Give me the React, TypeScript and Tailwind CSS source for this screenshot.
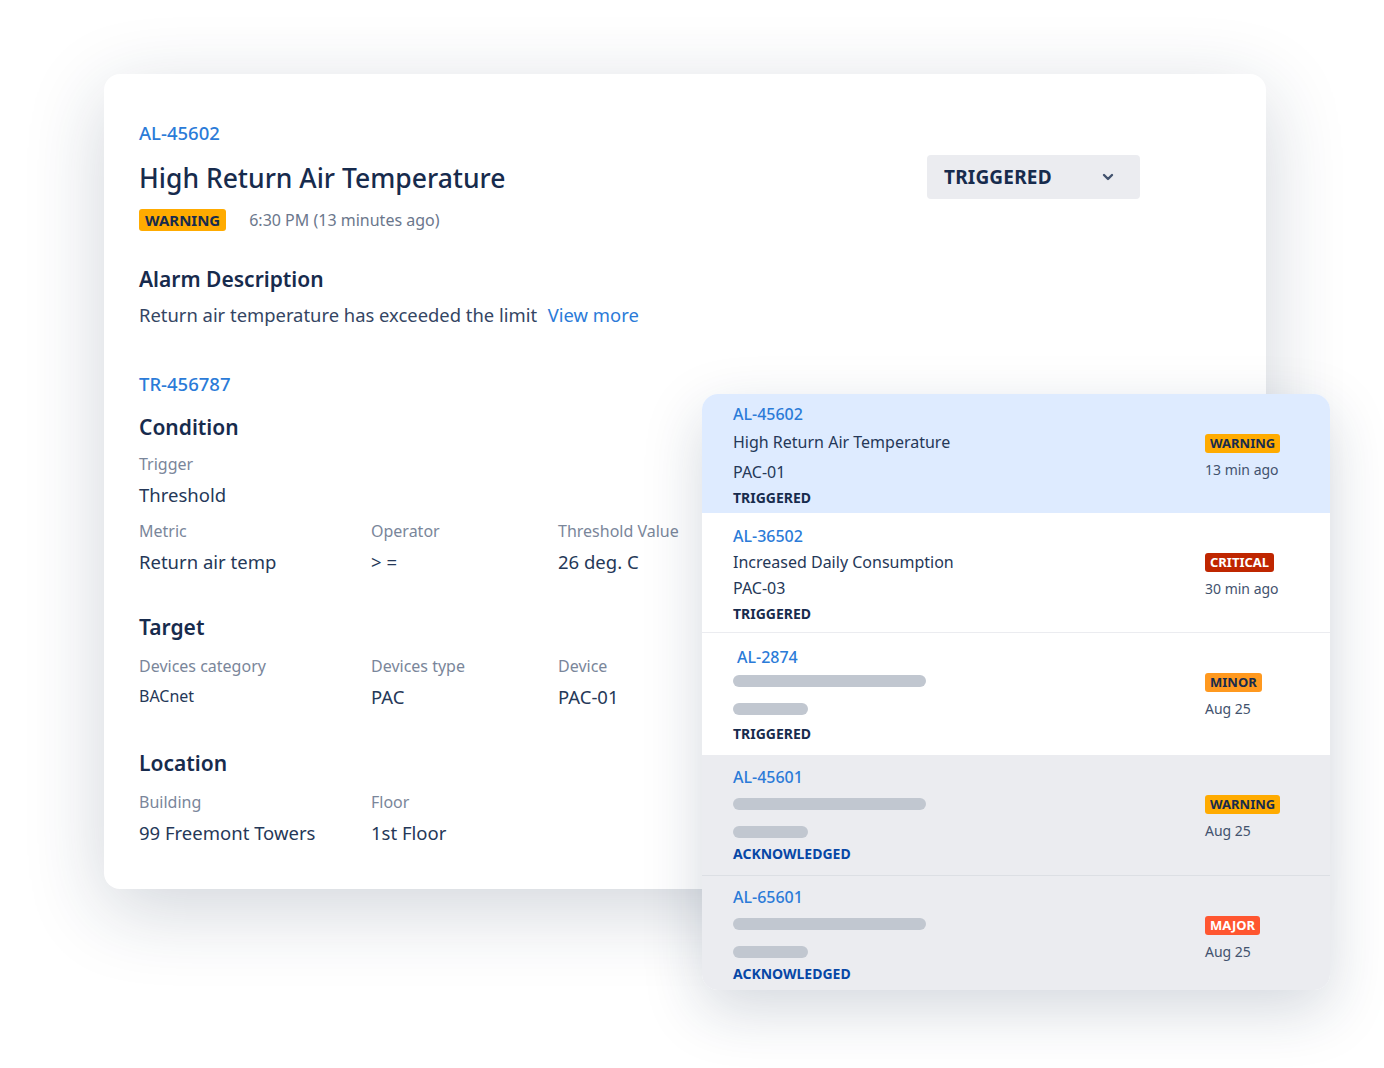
import React from "react";

const FONT = { fontFamily: '"Noto Sans", "Open Sans", sans-serif' };

type Badge = { label: string; cls: string };

const badges: Record<string, Badge> = {
  WARNING: { label: "WARNING", cls: "bg-[#ffab00] text-[#172b4d]" },
  CRITICAL: { label: "CRITICAL", cls: "bg-[#bf2600] text-white" },
  MINOR: { label: "MINOR", cls: "bg-[#ff991f] text-[#172b4d]" },
  MAJOR: { label: "MAJOR", cls: "bg-[#ff5630] text-white" },
};

type Row = {
  id: string;
  title?: string;
  device?: string;
  status: "TRIGGERED" | "ACKNOWLEDGED";
  badge: keyof typeof badges;
  time: string;
  bg: string;
  h: string;
  pt: string;
  lh: string;
  smt: string;
  idOffset?: boolean;
};

const rows: Row[] = [
  { id: "AL-45602", title: "High Return Air Temperature", device: "PAC-01", status: "TRIGGERED", badge: "WARNING", time: "13 min ago", bg: "bg-[#deebff]", h: "h-[119px]", pt: "pt-[7px]", lh: "h-[30px] leading-[30px]", smt: "-mt-[2px]" },
  { id: "AL-36502", title: "Increased Daily Consumption", device: "PAC-03", status: "TRIGGERED", badge: "CRITICAL", time: "30 min ago", bg: "bg-white border-b border-[#ebecf0]", h: "h-[120px]", pt: "pt-[10px]", lh: "h-[26px] leading-[26px]", smt: "mt-0" },
  { id: "AL-2874", status: "TRIGGERED", badge: "MINOR", time: "Aug 25", bg: "bg-white", h: "h-[122px]", pt: "pt-[8px]", lh: "", smt: "-mt-[2px]", idOffset: true },
  { id: "AL-45601", status: "ACKNOWLEDGED", badge: "WARNING", time: "Aug 25", bg: "bg-[#ebecf0] border-b border-[#dcdfe4]", h: "h-[121px]", pt: "pt-[9px]", lh: "", smt: "-mt-[5px]" },
  { id: "AL-65601", status: "ACKNOWLEDGED", badge: "MAJOR", time: "Aug 25", bg: "bg-[#ebecf0]", h: "flex-1", pt: "pt-[8px]", lh: "", smt: "-mt-[5px]" },
];

function ListRow({ r }: { r: Row }) {
  const b = badges[r.badge];
  return (
    <div className={`flex ${r.bg} ${r.h} pl-[31px]`}>
      <div className={`flex-1 ${r.pt}`}>
        <div className={`h-[26px] leading-[26px] text-[16px] font-medium text-[#2b7bd8] ${r.idOffset ? "ml-[4px] mt-[3px]" : ""}`}>{r.id}</div>
        {r.title ? (
          <>
            <div className={`${r.lh} text-[16px] text-[#253858]`}>{r.title}</div>
            <div className={`${r.lh} text-[16px] text-[#253858]`}>{r.device}</div>
          </>
        ) : (
          <>
            <div className={`flex h-[28px] items-center ${r.idOffset ? "-mt-[3px]" : ""}`}>
              <div className="h-[12px] w-[193px] rounded-full bg-[#c1c7d0]" />
            </div>
            <div className="flex h-[28px] items-center">
              <div className="h-[12px] w-[75px] rounded-full bg-[#c1c7d0]" />
            </div>
          </>
        )}
        <div className={`${r.smt} h-[26px] leading-[26px] text-[14px] font-bold ${r.status === "ACKNOWLEDGED" ? "text-[#0747a6]" : "text-[#172b4d]"}`}>{r.status}</div>
      </div>
      <div className="w-[125px] pt-[36px]">
        <span className={`inline-block h-[19px] rounded-[3px] px-[5px] text-[13px] font-bold leading-[19px] ${b.cls}`}>{b.label}</span>
        <div className="mt-[7px] text-[14px] leading-[18px] text-[#42526e]">{r.time}</div>
      </div>
    </div>
  );
}

function Field({ label, value, small }: { label: string; value: string; small?: boolean }) {
  return (
    <div>
      <div className="h-[30px] leading-[30px] text-[16px] text-[#7a869a]">{label}</div>
      <div className={`h-[30px] leading-[30px] text-[#253858] ${small ? "text-[16px] mt-[0px]" : "text-[18.5px] mt-[1px]"}`}>{value}</div>
    </div>
  );
}

export default function App() {
  return (
    <div className="relative h-[1068px] w-[1384px] overflow-hidden bg-white" style={FONT}>
      <div className="pl-[104px] pt-[74px]">
        <div className="h-[815px] w-[1162px] rounded-[16px] bg-white pl-[35px] pt-[44px] shadow-[0_20px_80px_rgba(23,43,77,0.2)]">
          <div className="flex items-start justify-between pr-[126px]">
            <div>
              <div className="h-[30px] leading-[30px] text-[18.5px] font-medium text-[#2b7bd8]">AL-45602</div>
              <div className="mt-[15px] h-[30px] leading-[30px] text-[26.5px] font-medium text-[#172b4d]">High Return Air Temperature</div>
              <div className="mt-[12px] flex h-[30px] items-center">
                <span className="inline-block h-[22px] rounded-[3px] bg-[#ffab00] px-[6px] text-[15px] font-bold leading-[22px] text-[#172b4d]">WARNING</span>
                <span className="ml-[23px] text-[16px] text-[#6b778c]">6:30 PM (13 minutes ago)</span>
              </div>
            </div>
            <div className="mt-[37px] flex h-[44px] w-[213px] items-center justify-between rounded-[4px] bg-[#ebecf0] pl-[17px] pr-[26px]">
              <span className="text-[19px] font-bold tracking-[0.2px] text-[#172b4d]">TRIGGERED</span>
              <svg width="12" height="8" viewBox="0 0 12 8" fill="none">
                <path d="M2 2l4 4 4-4" stroke="#42526e" strokeWidth="2.4" strokeLinecap="round" strokeLinejoin="round" />
              </svg>
            </div>
          </div>

          <div className="mt-[29px] h-[30px] leading-[30px] text-[21px] font-semibold text-[#172b4d]">Alarm Description</div>
          <div className="mt-[6px] h-[30px] leading-[30px] text-[18.4px] text-[#344563]">
            Return air temperature has exceeded the limit <span className="ml-[6px] text-[#2b7bd8]">View more</span>
          </div>

          <div className="mt-[39px] h-[30px] leading-[30px] text-[18.5px] font-medium text-[#2b7bd8]">TR-456787</div>
          <div className="mt-[13px] h-[30px] leading-[30px] text-[21px] font-semibold text-[#172b4d]">Condition</div>
          <div className="mt-[7px] h-[30px] leading-[30px] text-[16px] text-[#7a869a]">Trigger</div>
          <div className="mt-[1px] h-[30px] leading-[30px] text-[18.5px] text-[#253858]">Threshold</div>
          <div className="mt-[6px] grid grid-cols-[232px_187px_200px]">
            <Field label="Metric" value="Return air temp" />
            <Field label="Operator" value="> =" />
            <Field label="Threshold Value" value="26 deg. C" />
          </div>

          <div className="mt-[35px] h-[30px] leading-[30px] text-[21px] font-semibold text-[#172b4d]">Target</div>
          <div className="mt-[9px] grid grid-cols-[232px_187px_200px]">
            <Field label="Devices category" value="BACnet" small />
            <Field label="Devices type" value="PAC" />
            <Field label="Device" value="PAC-01" />
          </div>

          <div className="mt-[36px] h-[30px] leading-[30px] text-[21px] font-semibold text-[#172b4d]">Location</div>
          <div className="mt-[9px] grid grid-cols-[232px_187px_200px]">
            <Field label="Building" value="99 Freemont Towers" />
            <Field label="Floor" value="1st Floor" />
          </div>
        </div>
      </div>

      <div className="absolute left-[702px] top-[394px] flex h-[596px] w-[628px] flex-col overflow-hidden rounded-[16px] bg-white shadow-[0_20px_60px_rgba(23,43,77,0.18)]">
        {rows.map((r) => (
          <ListRow key={r.id} r={r} />
        ))}
      </div>
    </div>
  );
}
